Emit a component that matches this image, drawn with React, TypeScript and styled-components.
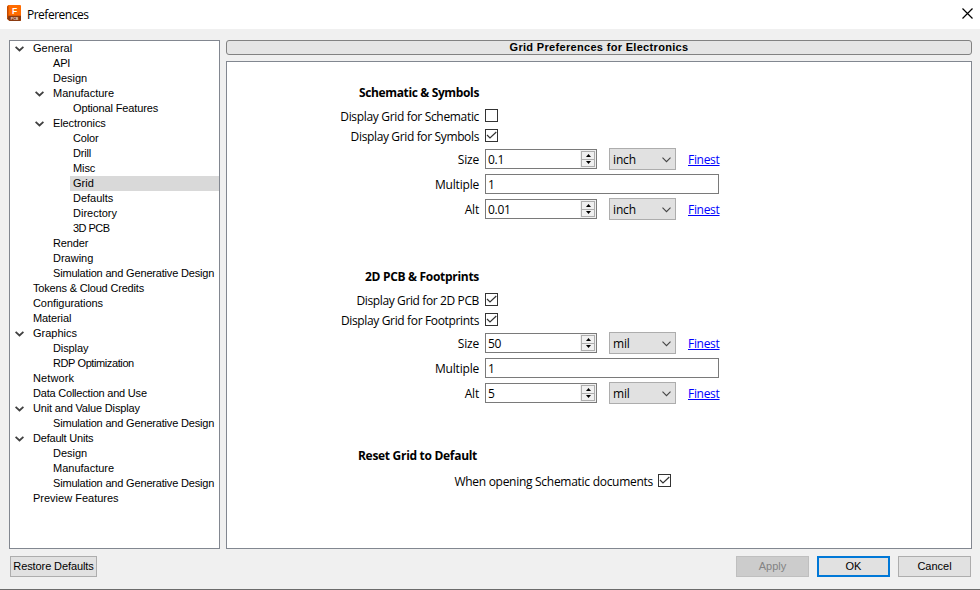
import React from "react";
import styled, { createGlobalStyle, css } from "styled-components";

const GlobalStyle = createGlobalStyle`
  * { box-sizing: border-box; }
  body { margin: 0; background: #f0f0f0; }
`;

const uiFont = css`
  font-family: "Open Sans", "Noto Sans", sans-serif;
  font-size: 12px;
  letter-spacing: -0.15px;
`;

const Window = styled.div`
  width: 980px;
  height: 590px;
  display: flex;
  flex-direction: column;
  background: #f0f0f0;
  border-bottom: 1px solid #6b6b6b;
  color: #000;
  font-family: "Liberation Sans", Arial, sans-serif;
  font-size: 11px;
  white-space: nowrap;
  overflow: hidden;
`;

const TitleBar = styled.header`
  height: 29px;
  flex: none;
  display: flex;
  align-items: flex-start;
  padding: 5px 7px 0 7px;
  background: #fff;
`;

const Title = styled.span`
  ${uiFont}
  letter-spacing: -0.5px;
  line-height: 18px;
  padding-top: 1px;
  margin-left: 6px;
  flex: 1;
`;

const CloseIcon = styled.svg`
  margin-top: 3px;
`;

const Body = styled.main`
  display: flex;
  gap: 6px;
  height: 520px;
  padding: 11px 8px 0 9px;
`;

const Tree = styled.nav`
  width: 211px;
  border: 1px solid #828790;
  background: #fff;
`;

const TreeRow = styled.div<{ $level: number }>`
  height: 15px;
  display: flex;
  padding-left: ${(p) => p.$level * 20}px;
`;

const Twisty = styled.span`
  width: 20px;
  flex: none;
  display: flex;
  align-items: center;
  padding-left: 5px;
`;

const TreeLabel = styled.span<{ $selected?: boolean; $spacing: number }>`
  flex: 1;
  padding-left: 3px;
  line-height: 15px;
  letter-spacing: ${(p) => p.$spacing}px;
  background: ${(p) => (p.$selected ? "#d9d9d9" : "transparent")};
`;

const Main = styled.section`
  flex: 1;
  display: flex;
  flex-direction: column;
  gap: 6px;
`;

const Banner = styled.div`
  height: 15px;
  border: 1px solid #828282;
  border-radius: 3px;
  background: #e5e5e5;
  font-weight: bold;
  letter-spacing: 0.32px;
  line-height: 13px;
  text-align: center;
`;

const Panel = styled.div`
  flex: 1;
  border: 1px solid #828790;
  background: #fff;
  ${uiFont}
`;

const Group = styled.div<{ $top: number }>`
  padding-top: ${(p) => p.$top}px;
`;

const Heading = styled.h2<{ $right?: number; $spacing?: number; $gap?: number }>`
  width: ${(p) => p.$right ?? 252}px;
  height: 20px;
  margin: 0 0 ${(p) => p.$gap ?? 4}px;
  font-size: 12px;
  font-weight: 700;
  line-height: 22px;
  letter-spacing: ${(p) => p.$spacing ?? -0.3}px;
  text-align: right;
`;

const CheckRow = styled.div`
  display: flex;
  align-items: center;
  height: 19px;
  margin-bottom: 1px;
`;

const FieldRow = styled(CheckRow)`
  height: 24px;
`;

const Fields = styled.div`
  padding-top: 1px;
`;

const Label = styled.label<{ $width?: number; $spacing?: number }>`
  width: ${(p) => p.$width ?? 252}px;
  margin-right: ${(p) => (p.$width ? 5 : 6)}px;
  text-align: right;
  line-height: 18px;
  padding-top: 2px;
  letter-spacing: ${(p) => p.$spacing ?? -0.2}px;
`;

const Box = styled.span`
  width: 13px;
  height: 13px;
  display: flex;
  border: 1px solid #333;
  background: #fff;
`;

const Input = styled.div<{ $wide?: boolean }>`
  width: ${(p) => (p.$wide ? 234 : 112)}px;
  height: 20px;
  display: flex;
  justify-content: space-between;
  padding-left: 2px;
  border: 1px solid #7a7a7a;
  background: #fff;
  line-height: 20px;
  letter-spacing: -0.3px;
`;

const Spinner = styled.span`
  width: 16px;
  padding: 1px;
  background: #f0f0f0;
  display: flex;
  flex-direction: column;
`;

const SpinButton = styled.span`
  height: 8px;
  flex: 1;
  display: flex;
  align-items: center;
  justify-content: center;
  border: 1px solid #adadad;
  & + & { border-top: 0; }
`;

const Combo = styled.div`
  width: 67px;
  height: 22px;
  display: flex;
  align-items: center;
  justify-content: space-between;
  margin: 0 12px;
  padding: 1px 4px 0 3px;
  border: 1px solid #adadad;
  background: #e1e1e1;
`;

const Link = styled.a`
  color: #00f;
  line-height: 18px;
  padding-top: 2px;
  letter-spacing: -0.3px;
  text-decoration: underline;
`;

const Footer = styled.footer`
  display: flex;
  gap: 8px;
  padding: 7px 9px 0 10px;
`;

const Button = styled.button<{ $kind?: "primary" | "disabled" | "wide" }>`
  width: ${(p) => (p.$kind === "wide" ? 87 : 73)}px;
  height: 21px;
  padding: 0 0 2px;
  margin-right: ${(p) => (p.$kind === "wide" ? "auto" : 0)};
  font: 11px "Liberation Sans", Arial, sans-serif;
  letter-spacing: ${(p) => (p.$kind === "wide" ? -0.1 : 0)}px;
  color: ${(p) => (p.$kind === "disabled" ? "#838383" : "#000")};
  background: ${(p) => (p.$kind === "disabled" ? "#ccc" : "#e1e1e1")};
  border: ${(p) =>
    p.$kind === "primary" ? "2px solid #0078d7" : `1px solid ${p.$kind === "disabled" ? "#bfbfbf" : "#adadad"}`};
`;

const LogoText = styled.text`
  font-family: "Liberation Sans", Arial, sans-serif;
  font-weight: bold;
  fill: #fff;
`;

const Logo = () => (
  <svg width="14" height="16" viewBox="0 0 14 16">
    <path d="M1.5 0H13a1 1 0 0 1 1 1v14a1 1 0 0 1-1 1H2.500L0 13.800V1.500Z" fill="#ff6b00" />
    <path d="M0 1.500L1.500 0V11L0 13Z" fill="#c24a00" />
    <path d="M1.500 10.800H14V15a1 1 0 0 1-1 1H2.500L0 13.800Z" fill="#8a3a10" />
    <LogoText x="5" y="9" fontSize="8.500">F</LogoText>
    <LogoText x="3.800" y="14.800" fontSize="3.500" opacity="0.8">PCB</LogoText>
  </svg>
);

const Chevron = () => (
  <svg width="9" height="6" viewBox="0 0 9 6" fill="none" stroke="#404040" strokeWidth="1.800">
    <path d="M0.600 0.900L4.500 4.500L8.400 0.900" />
  </svg>
);

const Check = ({ on }: { on: boolean }) => (
  <Box>
    {on && (
      <svg width="11" height="11" viewBox="0 0 11 11" fill="none" stroke="#333" strokeWidth="1.200">
        <path d="M1 5L4 8L10.300 2" />
      </svg>
    )}
  </Box>
);

const Spin = ({ value }: { value: string }) => (
  <Input>
    {value}
    <Spinner>
      <SpinButton>
        <svg width="5" height="3" viewBox="0 0 5 3"><path d="M0 3L2.500 0L5 3Z" /></svg>
      </SpinButton>
      <SpinButton>
        <svg width="5" height="3" viewBox="0 0 5 3"><path d="M0 0L2.500 3L5 0Z" /></svg>
      </SpinButton>
    </Spinner>
  </Input>
);

const Measure = ({ label, value, unit }: { label: string; value: string; unit: string }) => (
  <FieldRow>
    <Label>{label}</Label>
    <Spin value={value} />
    <Combo>
      {unit}
      <svg width="9" height="6" viewBox="0 0 9 6" fill="none" stroke="#444" strokeWidth="1.100">
        <path d="M0.500 0.700L4.500 4.700L8.500 0.700" />
      </svg>
    </Combo>
    <Link>Finest</Link>
  </FieldRow>
);

type TreeNode = { level: number; text: string; open?: boolean; spacing?: number };
const nodes: TreeNode[] = [
  { level: 0, text: "General", open: true },
  { level: 1, text: "API" , spacing: -0.2 },
  { level: 1, text: "Design" },
  { level: 1, text: "Manufacture", open: true },
  { level: 2, text: "Optional Features", spacing: -0.14 },
  { level: 1, text: "Electronics", open: true, spacing: -0.1 },
  { level: 2, text: "Color", spacing: -0.15 },
  { level: 2, text: "Drill", spacing: -0.2 },
  { level: 2, text: "Misc", spacing: -0.1 },
  { level: 2, text: "Grid" },
  { level: 2, text: "Defaults" },
  { level: 2, text: "Directory" },
  { level: 2, text: "3D PCB", spacing: -0.55 },
  { level: 1, text: "Render", spacing: -0.12 },
  { level: 1, text: "Drawing" },
  { level: 1, text: "Simulation and Generative Design", spacing: -0.18 },
  { level: 0, text: "Tokens & Cloud Credits", spacing: -0.18 },
  { level: 0, text: "Configurations", spacing: -0.07 },
  { level: 0, text: "Material", spacing: -0.1 },
  { level: 0, text: "Graphics", open: true },
  { level: 1, text: "Display", spacing: -0.1 },
  { level: 1, text: "RDP Optimization", spacing: -0.4 },
  { level: 0, text: "Network", spacing: 0.1 },
  { level: 0, text: "Data Collection and Use", spacing: -0.21 },
  { level: 0, text: "Unit and Value Display", open: true, spacing: -0.17 },
  { level: 1, text: "Simulation and Generative Design", spacing: -0.18 },
  { level: 0, text: "Default Units", open: true, spacing: -0.2 },
  { level: 1, text: "Design" },
  { level: 1, text: "Manufacture" },
  { level: 1, text: "Simulation and Generative Design", spacing: -0.18 },
  { level: 0, text: "Preview Features" },
];

export default function App() {
  return (
    <Window>
      <GlobalStyle />
      <TitleBar>
        <Logo />
        <Title>Preferences</Title>
        <CloseIcon width="11" height="11" viewBox="0 0 11 11" stroke="#000" strokeWidth="1.200">
          <path d="M0.500 0.500L10.500 10.500M10.500 0.500L0.500 10.500" />
        </CloseIcon>
      </TitleBar>
      <Body>
        <Tree>
          {nodes.map(({ level, text, open, spacing = 0 }, i) => (
            <TreeRow key={i} $level={level}>
              <Twisty>{open && <Chevron />}</Twisty>
              <TreeLabel $selected={text === "Grid"} $spacing={spacing}>{text}</TreeLabel>
            </TreeRow>
          ))}
        </Tree>
        <Main>
          <Banner>Grid Preferences for Electronics</Banner>
          <Panel>
            <Group $top={20}>
              <Heading $spacing={-0.36}>Schematic &amp; Symbols</Heading>
              <CheckRow><Label $spacing={-0.33}>Display Grid for Schematic</Label><Check on={false} /></CheckRow>
              <CheckRow><Label $spacing={-0.36}>Display Grid for Symbols</Label><Check on /></CheckRow>
              <Fields>
                <Measure label="Size" value="0.1" unit="inch" />
                <FieldRow><Label>Multiple</Label><Input $wide>1</Input></FieldRow>
                <Measure label="Alt" value="0.01" unit="inch" />
              </Fields>
            </Group>
            <Group $top={44}>
              <Heading>2D PCB &amp; Footprints</Heading>
              <CheckRow><Label $spacing={-0.38}>Display Grid for 2D PCB</Label><Check on /></CheckRow>
              <CheckRow><Label $spacing={-0.35}>Display Grid for Footprints</Label><Check on /></CheckRow>
              <Fields>
                <Measure label="Size" value="50" unit="mil" />
                <FieldRow><Label>Multiple</Label><Input $wide>1</Input></FieldRow>
                <Measure label="Alt" value="5" unit="mil" />
              </Fields>
            </Group>
            <Group $top={39}>
              <Heading $right={250} $gap={6}>Reset Grid to Default</Heading>
              <CheckRow><Label $width={426} $spacing={-0.28}>When opening Schematic documents</Label><Check on /></CheckRow>
            </Group>
          </Panel>
        </Main>
      </Body>
      <Footer>
        <Button $kind="wide">Restore Defaults</Button>
        <Button $kind="disabled">Apply</Button>
        <Button $kind="primary">OK</Button>
        <Button>Cancel</Button>
      </Footer>
    </Window>
  );
}
